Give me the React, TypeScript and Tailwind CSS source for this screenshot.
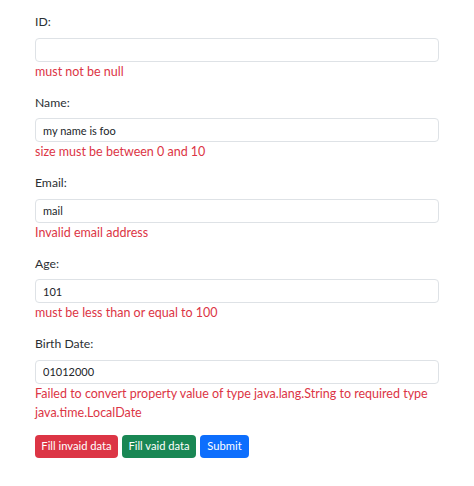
import React from "react";

type Field = {
  label: string;
  value: string;
  error: string;
};

const fields: Field[] = [
  { label: "ID:", value: "", error: "must not be null" },
  { label: "Name:", value: "my name is foo", error: "size must be between 0 and 10" },
  { label: "Email:", value: "mail", error: "Invalid email address" },
  { label: "Age:", value: "101", error: "must be less than or equal to 100" },
  {
    label: "Birth Date:",
    value: "01012000",
    error:
      "Failed to convert property value of type java.lang.String to required type java.time.LocalDate",
  },
];

export default function App() {
  return (
    <div className="min-h-screen bg-white px-[35px] pt-[12px] font-['Lato',sans-serif] leading-[19.5px] text-[#212529]">
      <form onSubmit={(e) => e.preventDefault()}>
        {fields.map((f) => (
          <div key={f.label} className="mb-[11.5px]">
            <label className="mb-[6px] block text-[12.2px] text-[#2b2f33]">{f.label}</label>
            <input
              type="text"
              defaultValue={f.value}
              className="block h-[24px] w-full rounded-[4px] border border-[#dee2e6] px-[7px] text-[11px] text-[#212529] outline-none"
            />
            <div className="text-[12.5px] text-[#dc3545]">{f.error}</div>
          </div>
        ))}
        <div className="flex gap-[4px] pt-[0.5px]">
          <button
            type="button"
            className="h-[23px] w-[83px] rounded-[4px] bg-[#dc3545] text-[11.2px] text-white"
          >
            Fill invaid data
          </button>
          <button
            type="button"
            className="h-[23px] w-[74px] rounded-[4px] bg-[#198754] text-[11.2px] text-white"
          >
            Fill vaid data
          </button>
          <button
            type="submit"
            className="h-[23px] w-[49px] rounded-[4px] bg-[#0d6efd] text-[11.2px] text-white"
          >
            Submit
          </button>
        </div>
      </form>
    </div>
  );
}
